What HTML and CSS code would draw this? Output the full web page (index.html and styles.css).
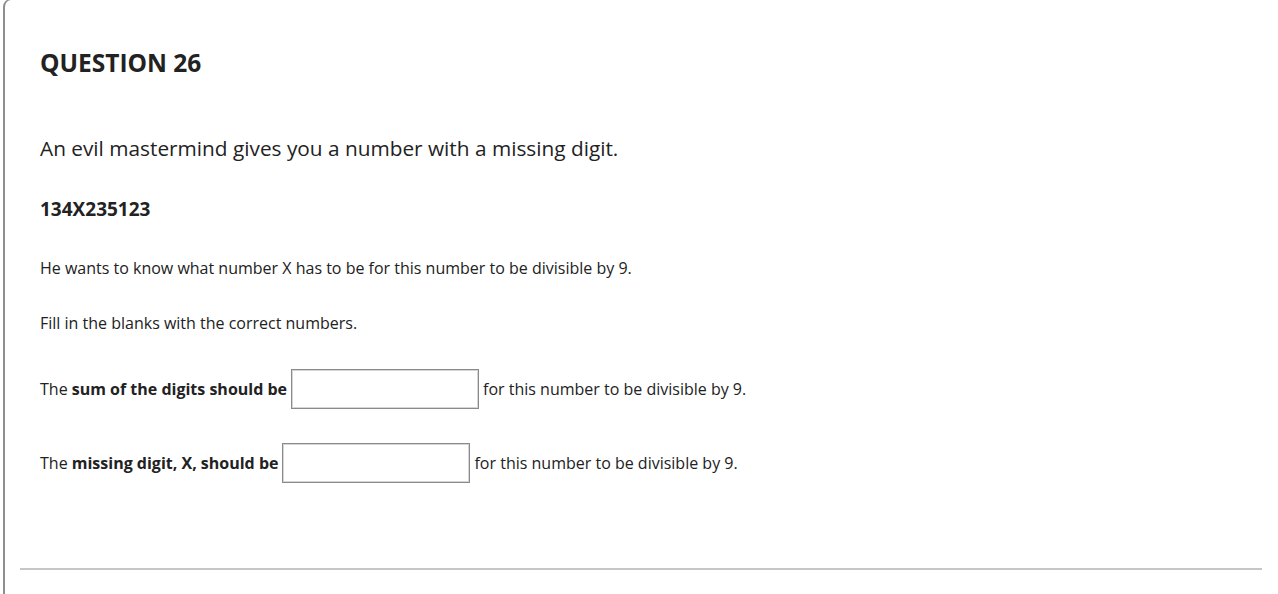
FILE: index.html
```html
<!DOCTYPE html>
<html>
<head>
<meta charset="utf-8">
<link rel="stylesheet" href="styles.css">
</head>
<body>
<div class="card">
  <div class="inner">
    <h2 class="qtitle">QUESTION 26</h2>
    <p class="lead">An evil mastermind gives you a number with a missing digit.</p>
    <p class="num">134X235123</p>
    <p class="txt p1">He wants to know what number X has to be for this number to be divisible by 9.</p>
    <p class="txt p2">Fill in the blanks with the correct numbers.</p>
    <div class="row r1">
      <span>The <b>sum of the digits should be</b></span>
      <input class="blank" type="text">
      <span>for this number to be divisible by 9.</span>
    </div>
    <div class="row r2">
      <span>The <b>missing digit, X, should be</b></span>
      <input class="blank" type="text">
      <span>for this number to be divisible by 9.</span>
    </div>
  </div>
  <div class="rule"></div>
</div>
</body>
</html>
```
FILE: styles.css
```css
html, body {
  margin: 0;
  padding: 0;
  background: #fff;
}
body {
  font-family: "Open Sans", "DejaVu Sans", sans-serif;
  color: #222;
  overflow: hidden;
  height: 594px;
}
.card {
  margin-left: 3px;
  margin-top: -1px;
  border-left: 2px solid #8e8e8e;
  border-top: 1px solid #8e8e8e;
  border-top-left-radius: 8px;
  height: 620px;
  padding-left: 15px;
  padding-right: 16px;
}
.inner {
  padding-left: 20px;
  padding-top: 45px;
}
.qtitle {
  margin: 0;
  font-size: 24.5px;
  font-weight: 700;
  line-height: 36px;
  color: #222;
}
.lead {
  margin: 0;
  margin-top: 53px;
  font-size: 20.8px;
  line-height: 28px;
}
.num {
  margin: 0;
  margin-top: 35px;
  font-size: 19px;
  font-weight: 700;
  line-height: 24px;
}
.txt {
  margin: 0;
  font-size: 16px;
  line-height: 22px;
}
.p1 { margin-top: 36px; }
.p2 { margin-top: 33px; }
.row {
  display: flex;
  align-items: center;
  font-size: 16px;
  gap: 4px;
}
.row b { font-weight: 700; }
.r1 { margin-top: 35px; }
.r2 { margin-top: 34px; }
.blank {
  box-sizing: border-box;
  width: 188px;
  height: 40px;
  border: 1px solid #8a8a8a;
  box-shadow: inset 0 0 0 1px #d6d6d6;
  border-radius: 0;
  margin: 0;
  padding: 0 6px;
  font-family: inherit;
  font-size: 15px;
  background: #fff;
}
.rule {
  margin-top: 85px;
  height: 2px;
  background: #c6c6c6;
}
```
